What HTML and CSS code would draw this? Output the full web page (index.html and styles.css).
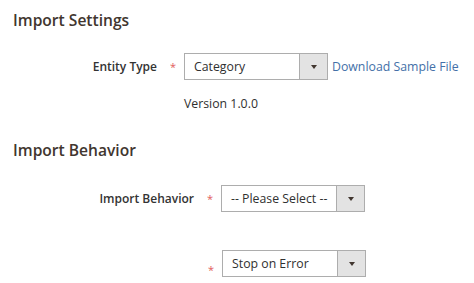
FILE: index.html
```html
<!DOCTYPE html>
<html lang="en">
<head>
<meta charset="utf-8">
<title>Import</title>
<link rel="stylesheet" href="styles.css">
</head>
<body>
<div class="page">
  <h2 class="title title-settings">Import Settings</h2>
  <div class="field field-entity">
    <label class="label">Entity Type</label>
    <span class="req">*</span>
    <div class="control">
      <div class="select"><span class="select-text">Category</span><span class="select-btn"><span class="arrow"></span></span></div>
      <a class="link" href="#">Download Sample File</a>
    </div>
  </div>
  <div class="note">Version 1.0.0</div>

  <h2 class="title title-behavior">Import Behavior</h2>
  <div class="field field-behavior">
    <label class="label">Import Behavior</label>
    <span class="req">*</span>
    <div class="control">
      <div class="select"><span class="select-text">-- Please Select --</span><span class="select-btn"><span class="arrow"></span></span></div>
    </div>
  </div>
  <div class="field field-error">
    <label class="label"></label>
    <span class="req req-low">*</span>
    <div class="control">
      <div class="select"><span class="select-text">Stop on Error</span><span class="select-btn"><span class="arrow"></span></span></div>
    </div>
  </div>
</div>
</body>
</html>
```
FILE: styles.css
```css
html, body {
  margin: 0;
  padding: 0;
  background: #ffffff;
}
body {
  font-family: "Open Sans", "Noto Sans", "Liberation Sans", sans-serif;
  color: #303030;
  font-size: 12.3px;
}
.page {
  width: 474px;
  height: 283px;
  overflow: hidden;
}
.title {
  margin: 0;
  padding-left: 13px;
  font-size: 15.6px;
  font-weight: 600;
  line-height: 22px;
  color: #41362f;
}
.title-settings {
  padding-top: 9px;
}
.title-behavior {
  margin-top: 27px;
}
.field {
  display: grid;
  align-items: center;
}
.field-entity {
  grid-template-columns: 157px 27px auto;
  margin-top: 22px;
}
.field-behavior {
  grid-template-columns: 194px 27px auto;
  margin-top: 24px;
}
.field-error {
  grid-template-columns: 195px 27px auto;
  margin-top: 38px;
}
.label {
  text-align: right;
  font-weight: 600;
  font-size: 12px;
  color: #333333;
}
.req {
  padding-left: 13px;
  color: #e25c5c;
  font-size: 11px;
  line-height: 11px;
}
.req-low {
  padding-top: 11px;
}
.control {
  display: flex;
  align-items: center;
}
.select {
  box-sizing: border-box;
  width: 144px;
  height: 27px;
  border: 1px solid #adadad;
  display: flex;
  align-items: stretch;
  background: #ffffff;
}
.select-text {
  flex: 1;
  padding-left: 9px;
  line-height: 25px;
  white-space: nowrap;
  color: #303030;
}
.select-btn {
  width: 27px;
  border-left: 1px solid #adadad;
  background: #e3e3e3;
  display: flex;
  align-items: center;
  justify-content: center;
}
.arrow {
  width: 0;
  height: 0;
  border-left: 3.5px solid transparent;
  border-right: 3.5px solid transparent;
  border-top: 4px solid #41362f;
  margin-top: 1px;
}
.link {
  margin-left: 4px;
  color: #4470a8;
  text-decoration: none;
  white-space: nowrap;
}
.note {
  padding-left: 184px;
  margin-top: 15px;
  line-height: 17px;
}
```
